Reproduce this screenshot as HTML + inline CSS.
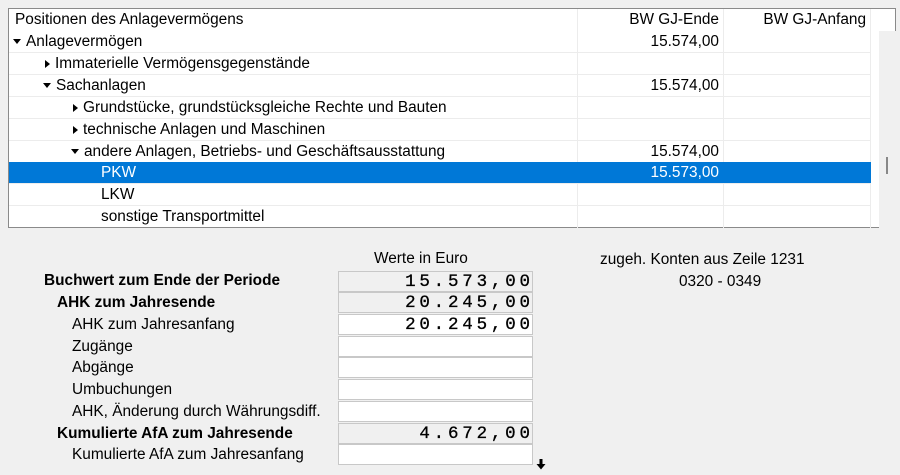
<!DOCTYPE html>
<html><head><meta charset="utf-8"><style>
*{margin:0;padding:0;box-sizing:border-box}
body{width:900px;height:475px;background:#f0f0f0;font-family:"Liberation Sans",sans-serif;font-size:15.4px;color:#000;position:relative;overflow:hidden}
.a{position:absolute;white-space:nowrap}
#box{position:absolute;left:8px;top:8px;width:888px;height:220px;border:1px solid #8a8a8a;background:#fff}
.row{position:absolute;left:0;width:862px;height:22px;border-bottom:1px solid #ececec;line-height:21px}
.c1,.c2{position:absolute;top:0;height:100%;border-left:1px solid #ececec}
.c1{left:568px;width:146px;text-align:right;padding-right:4px}
.c2{left:714px;width:148px;border-right:1px solid #ececec}
.sel{background:#0078d7;color:#fff}
.sel .c1,.sel .c2{border-color:#0078d7}
.tri{display:inline-block;width:0;height:0;margin-right:5px;vertical-align:middle}
.dn{border-left:4px solid transparent;border-right:4px solid transparent;border-top:5px solid #000}
.rt{border-top:4px solid transparent;border-bottom:4px solid transparent;border-left:5px solid #000}
.lbl{position:absolute;line-height:21px;white-space:nowrap}
.b{font-weight:bold}
.in{position:absolute;left:338px;width:195px;height:21px;border:1px solid #c8c8c8;background:#fff;font-family:"Liberation Mono",monospace;font-size:17.5px;text-align:right;letter-spacing:3.8px;padding-right:2px;line-height:20px;-webkit-text-stroke:0.3px #000}
.in span{margin-right:-3.8px}
.g{background:#f0f0f0}
</style></head><body>
<div id="box">
 <div class="row" style="top:0;height:22px;border:none"><span class="a" style="left:6px;top:0">Positionen des Anlagevermögens</span><div class="c1">BW GJ-Ende</div><div class="c2" style="text-align:right;padding-right:4px;border-right:1px solid #ececec">BW GJ-Anfang</div></div>
 <div class="row" style="top:22px"><span class="a" style="left:4px"><i class="tri dn"></i>Anlagevermögen</span><div class="c1">15.574,00</div><div class="c2"></div></div>
 <div class="row" style="top:44px"><span class="a" style="left:36px"><i class="tri rt"></i>Immaterielle Vermögensgegenstände</span><div class="c1"></div><div class="c2"></div></div>
 <div class="row" style="top:66px"><span class="a" style="left:34px"><i class="tri dn"></i>Sachanlagen</span><div class="c1">15.574,00</div><div class="c2"></div></div>
 <div class="row" style="top:88px"><span class="a" style="left:64px"><i class="tri rt"></i>Grundstücke, grundstücksgleiche Rechte und Bauten</span><div class="c1"></div><div class="c2"></div></div>
 <div class="row" style="top:110px"><span class="a" style="left:64px"><i class="tri rt"></i>technische Anlagen und Maschinen</span><div class="c1"></div><div class="c2"></div></div>
 <div class="row" style="top:132px"><span class="a" style="left:62px"><i class="tri dn"></i>andere Anlagen, Betriebs- und Geschäftsausstattung</span><div class="c1">15.574,00</div><div class="c2"></div></div>
 <div class="row sel" style="top:153px"><span class="a" style="left:92px">PKW</span><div class="c1">15.573,00</div><div class="c2"></div></div>
 <div class="row" style="top:175px"><span class="a" style="left:92px">LKW</span><div class="c1"></div><div class="c2"></div></div>
 <div class="row" style="top:197px;border:none"><span class="a" style="left:92px">sonstige Transportmittel</span><div class="c1"></div><div class="c2"></div></div>
 <div style="position:absolute;left:870px;top:22px;width:17px;height:197px;background:#f0f0f0"></div>
 <div style="position:absolute;left:877px;top:148px;width:2px;height:17px;background:#888"></div>
</div>
<span class="a" style="left:374px;top:250px">Werte in Euro</span>
<span class="a" style="left:600px;top:251px">zugeh. Konten aus Zeile 1231</span>
<span class="a" style="left:679px;top:273px">0320 - 0349</span>
<span class="lbl b" style="left:44px;top:270px">Buchwert zum Ende der Periode</span>
<span class="lbl b" style="left:57px;top:292px">AHK zum Jahresende</span>
<span class="lbl" style="left:72px;top:314px">AHK zum Jahresanfang</span>
<span class="lbl" style="left:72px;top:336px">Zugänge</span>
<span class="lbl" style="left:72px;top:357px">Abgänge</span>
<span class="lbl" style="left:72px;top:379px">Umbuchungen</span>
<span class="lbl" style="left:72px;top:401px">AHK, Änderung durch Währungsdiff.</span>
<span class="lbl b" style="left:57px;top:423px">Kumulierte AfA zum Jahresende</span>
<span class="lbl" style="left:72px;top:444px">Kumulierte AfA zum Jahresanfang</span>
<div class="in g" style="top:271px"><span>15.573,00</span></div>
<div class="in g" style="top:292px"><span>20.245,00</span></div>
<div class="in" style="top:314px"><span>20.245,00</span></div>
<div class="in" style="top:336px"></div>
<div class="in" style="top:357px"></div>
<div class="in" style="top:379px"></div>
<div class="in" style="top:401px"></div>
<div class="in g" style="top:423px"><span>4.672,00</span></div>
<div class="in" style="top:444px"></div>
<svg class="a" style="left:536px;top:459px" width="10" height="11" viewBox="0 0 10 11"><rect x="3.5" y="0" width="3" height="6" fill="#000"/><path d="M0.5 5H9.5L5 10.5Z" fill="#000"/></svg>
</body></html>
